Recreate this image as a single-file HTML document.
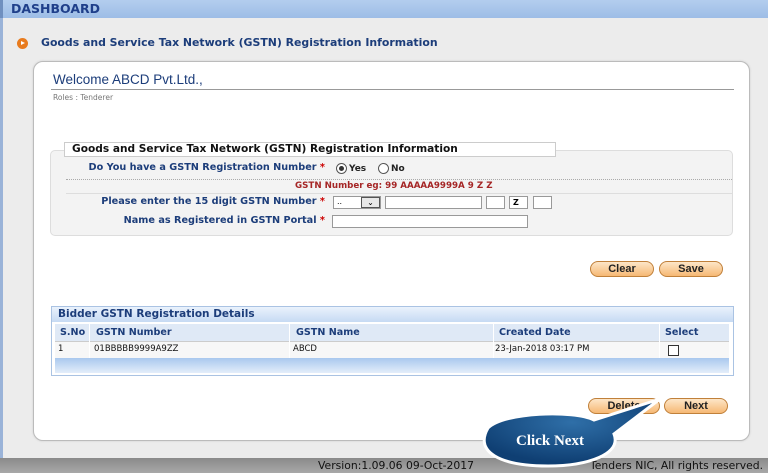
<!DOCTYPE html>
<html><head><meta charset="utf-8"><style>
*{margin:0;padding:0;box-sizing:border-box}
body{width:768px;height:473px;background:#ececec;font-family:"DejaVu Sans","Liberation Sans",sans-serif;position:relative;overflow:hidden;font-size:9px}
.a{position:absolute;white-space:nowrap}
.top{left:0;top:0;width:768px;height:18px;background:linear-gradient(#b3cdee,#9dbde6);border-left:3px solid #6f8fbf}
.top span{position:absolute;left:8px;top:1px;font-weight:bold;color:#1f3f8a;font-size:12.5px}
.bl{color:#1c3d7a;font-weight:bold}
.panel{left:33px;top:61px;width:717px;height:380px;background:#fff;border:1px solid #bbb;border-radius:10px;box-shadow:0 0 2px #ccc}
.btn{height:16px;border-radius:9px;border:1px solid #c0803a;background:linear-gradient(#fde6c8,#f6b874);font-weight:bold;font-family:"Liberation Sans",sans-serif;font-size:11px;text-align:center;line-height:14px;color:#222}
.inp{height:13px;border:1px solid #999;background:#fff}
.star{color:#c00}
.lbl{color:#1c3d7a;font-weight:bold;font-size:9.7px;text-align:right}
.th{color:#1c3d7a;font-weight:bold;font-size:9.6px}
.td{font-size:8.5px;color:#111}
</style></head><body>
<div class="a top"><span>DASHBOARD</span></div>
<div class="a" style="left:0;top:18px;width:3px;height:440px;background:#9ab3d8"></div>
<div class="a" style="left:17px;top:38px;width:11px;height:11px;border-radius:50%;background:#e87b1e"></div>
<div class="a" style="left:21px;top:41px;width:0;height:0;border-left:4px solid #fff;border-top:2.5px solid transparent;border-bottom:2.5px solid transparent"></div>
<div class="a bl" style="left:41px;top:36px;font-size:10.9px">Goods and Service Tax Network (GSTN) Registration Information</div>
<div class="a panel"></div>
<div class="a" style="left:53px;top:72px;color:#1c3d7a;font-size:13.5px;font-family:'Liberation Sans',sans-serif">Welcome ABCD Pvt.Ltd.,</div>
<div class="a" style="left:51px;top:89px;width:683px;height:1px;background:#999"></div>
<div class="a" style="left:53px;top:93px;color:#777;font-size:7.5px">Roles : Tenderer</div>

<div class="a" style="left:50px;top:150px;width:683px;height:86px;background:#f3f3f3;border:1px solid #ddd;border-radius:5px"></div>
<div class="a" style="left:64px;top:142px;width:492px;height:15px;background:#fff;border:1px solid #ccc;font-weight:bold;font-size:10.6px;padding:0 7px;line-height:13px;color:#111">Goods and Service Tax Network (GSTN) Registration Information</div>
<div class="a lbl" style="left:40px;top:162px;width:285px">Do You have a GSTN Registration Number <span class="star">*</span></div>
<div class="a" style="left:336px;top:163px;width:11px;height:11px;border:1px solid #555;border-radius:50%;background:#fff"></div>
<div class="a" style="left:339px;top:166px;width:5px;height:5px;border-radius:50%;background:#333"></div>
<div class="a" style="left:349px;top:164px;font-weight:bold;color:#222;font-size:9px">Yes</div>
<div class="a" style="left:378px;top:163px;width:11px;height:11px;border:1px solid #555;border-radius:50%;background:#fff"></div>
<div class="a" style="left:391px;top:164px;font-weight:bold;color:#222;font-size:9px">No</div>
<div class="a" style="left:66px;top:179px;width:666px;border-top:1px dotted #aaa"></div>
<div class="a" style="left:295px;top:181px;color:#a52525;font-weight:bold;font-size:8.7px">GSTN Number eg: 99 AAAAA9999A 9 Z Z</div>
<div class="a" style="left:66px;top:193px;width:666px;border-top:1px solid #ddd"></div>
<div class="a lbl" style="left:40px;top:196px;width:285px">Please enter the 15 digit GSTN Number <span class="star">*</span></div>
<div class="a inp" style="left:333px;top:196px;width:48px;font-size:8px;padding-left:3px;line-height:10px">..</div>
<div class="a" style="left:361px;top:197px;width:19px;height:11px;border:1px solid #555;background:#e8e8e8;font-size:8px;text-align:center;line-height:9px">&#8964;</div>
<div class="a inp" style="left:385px;top:196px;width:97px"></div>
<div class="a inp" style="left:486px;top:196px;width:19px"></div>
<div class="a inp" style="left:509px;top:196px;width:19px;font-weight:bold;font-size:8px;padding-left:3px;line-height:11px">Z</div>
<div class="a inp" style="left:533px;top:196px;width:19px"></div>
<div class="a lbl" style="left:40px;top:215px;width:285px">Name as Registered in GSTN Portal <span class="star">*</span></div>
<div class="a inp" style="left:332px;top:215px;width:196px"></div>

<div class="a btn" style="left:590px;top:261px;width:64px">Clear</div>
<div class="a btn" style="left:659px;top:261px;width:64px">Save</div>

<div class="a" style="left:51px;top:306px;width:683px;height:70px;border:1px solid #aac3e3;background:#fff"></div>
<div class="a" style="left:52px;top:307px;width:681px;height:15px;background:linear-gradient(#eaf2fc,#c6daf3);color:#1c3d7a;font-weight:bold;font-size:10.5px;padding:0 6px;line-height:15px">Bidder GSTN Registration Details</div>
<div class="a" style="left:55px;top:324px;width:674px;height:17px;background:#dfe9f6"></div>
<div class="a th" style="left:60px;top:327px">S.No</div>
<div class="a th" style="left:96px;top:327px">GSTN Number</div>
<div class="a th" style="left:296px;top:327px">GSTN Name</div>
<div class="a th" style="left:499px;top:327px">Created Date</div>
<div class="a th" style="left:665px;top:327px">Select</div>
<div class="a" style="left:55px;top:341px;width:674px;height:17px;background:#f7f7f7;border-top:1px solid #ccc"></div>
<div class="a" style="left:89px;top:324px;width:1px;height:34px;background:#fff"></div>
<div class="a" style="left:289px;top:324px;width:1px;height:34px;background:#fff"></div>
<div class="a" style="left:493px;top:324px;width:1px;height:34px;background:#fff"></div>
<div class="a" style="left:659px;top:324px;width:1px;height:34px;background:#fff"></div>
<div class="a td" style="left:58px;top:344px">1</div>
<div class="a td" style="left:94px;top:344px">01BBBBB9999A9ZZ</div>
<div class="a td" style="left:293px;top:344px">ABCD</div>
<div class="a td" style="left:495px;top:344px">23-Jan-2018 03:17 PM</div>
<div class="a" style="left:668px;top:345px;width:11px;height:11px;border:1px solid #333;background:#fff"></div>
<div class="a" style="left:55px;top:358px;width:674px;height:15px;background:linear-gradient(#a9c8ee,#e4eefa)"></div>

<div class="a btn" style="left:588px;top:398px;width:72px">Delete</div>
<div class="a btn" style="left:664px;top:398px;width:64px">Next</div>

<div class="a" style="left:0;top:458px;width:768px;height:15px;background:linear-gradient(#8a8a8a,#a8a8a8)"></div>
<div class="a" style="left:318px;top:459px;font-size:10.8px;color:#111">Version:1.09.06 09-Oct-2017</div>
<div class="a" style="left:590px;top:459px;font-size:10.8px;color:#111">Tenders NIC, All rights reserved.</div>

<svg class="a" style="left:470px;top:394px" width="198" height="79" viewBox="0 0 198 79">
<defs><radialGradient id="g" cx="50%" cy="35%" r="60%"><stop offset="0" stop-color="#2f6fa8"/><stop offset="1" stop-color="#0f3f73"/></radialGradient></defs>
<path d="M18 34 C34 18,104 16,124 26 L190 5 L144 40 C152 60,118 72,78 72 C30 72,4 58,18 34 Z" fill="url(#g)" stroke="#fff" stroke-width="3"/>
<text x="80" y="51" fill="#fff" font-family="Liberation Serif,serif" font-weight="bold" font-size="15" text-anchor="middle">Click Next</text>
</svg>
</body></html>
